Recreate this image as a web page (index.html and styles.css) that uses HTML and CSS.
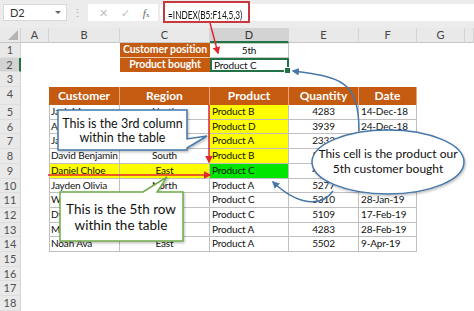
FILE: index.html
```html
<!DOCTYPE html>
<html>
<head>
<meta charset="utf-8">
<link rel="stylesheet" href="styles.css">
</head>
<body>
<div class="app">
  <div class="topbar">
    <div class="namebox"><span>D2</span><span class="caret"></span></div>
    <div class="dots">⋮</div>
    <div class="fxbtns"><span class="btn">✕</span><span class="btn">✓</span><span class="btn fx"><i>f</i><small>x</small></span></div>
    <div class="formula"><div class="fbox"><span class="ftext">=INDEX(B5:F14,5,3)</span></div></div>
  </div>
  <div class="sheet">
    <div class="ch corner"></div><div class="ch">A</div><div class="ch">B</div><div class="ch">C</div><div class="ch on">D</div><div class="ch">E</div><div class="ch">F</div><div class="ch">G</div><div class="ch"></div>

    <div class="rh">1</div><div></div><div></div><div class="lab top">Customer position</div><div class="val">5th</div><div></div><div></div><div></div><div></div>
    <div class="rh on">2</div><div></div><div></div><div class="lab">Product bought</div><div class="val sel">Product C</div><div></div><div></div><div></div><div></div>
    <div class="rh">3</div><div></div><div></div><div></div><div></div><div></div><div></div><div></div><div></div>

    <div class="rh">4</div><div></div><div class="th first">Customer</div><div class="th">Region</div><div class="th">Product</div><div class="th">Quantity</div><div class="th">Date</div><div></div><div></div>

    <div class="rh">5</div><div></div><div class="td first">Jack Mason</div><div class="td mid">North</div><div class="td yel">Product B</div><div class="td mid">4283</div><div class="td">14-Dec-18</div><div></div><div></div>
    <div class="rh">6</div><div></div><div class="td first">Aiden Lucas</div><div class="td mid"></div><div class="td yel">Product D</div><div class="td mid">3939</div><div class="td">24-Dec-18</div><div></div><div></div>
    <div class="rh">7</div><div></div><div class="td first">James Ethan</div><div class="td mid"></div><div class="td yel">Product A</div><div class="td mid">2333</div><div class="td"></div><div></div><div></div>
    <div class="rh">8</div><div></div><div class="td first">David Benjamin</div><div class="td mid">South</div><div class="td yel">Product B</div><div class="td mid">5123</div><div class="td"></div><div></div><div></div>
    <div class="rh">9</div><div></div><div class="td first yel">Daniel Chloe</div><div class="td mid yel">East</div><div class="td grn">Product C</div><div class="td mid">4782</div><div class="td"></div><div></div><div></div>
    <div class="rh">10</div><div></div><div class="td first">Jayden Olivia</div><div class="td mid">North</div><div class="td">Product A</div><div class="td mid">5277</div><div class="td"></div><div></div><div></div>
    <div class="rh">11</div><div></div><div class="td first">William Emma</div><div class="td mid"></div><div class="td">Product C</div><div class="td mid">5310</div><div class="td">28-Jan-19</div><div></div><div></div>
    <div class="rh">12</div><div></div><div class="td first">Dylan Sophia</div><div class="td mid"></div><div class="td">Product C</div><div class="td mid">5109</div><div class="td">17-Feb-19</div><div></div><div></div>
    <div class="rh">13</div><div></div><div class="td first">Mason Ella</div><div class="td mid"></div><div class="td">Product A</div><div class="td mid">4283</div><div class="td">28-Feb-19</div><div></div><div></div>
    <div class="rh">14</div><div></div><div class="td first">Noah Ava</div><div class="td mid">East</div><div class="td">Product A</div><div class="td mid">5502</div><div class="td">9-Apr-19</div><div></div><div></div>

    <div class="rh">15</div><div></div><div></div><div></div><div></div><div></div><div></div><div></div><div></div>
    <div class="rh">16</div><div></div><div></div><div></div><div></div><div></div><div></div><div></div><div></div>
    <div class="rh">17</div><div></div><div></div><div></div><div></div><div></div><div></div><div></div><div></div>
    <div class="rh">18</div><div></div><div></div><div></div><div></div><div></div><div></div><div></div><div></div>
  </div>

  <svg class="overlay" width="474" height="311" viewBox="0 0 474 311">
    <defs>
      <marker id="ar" viewBox="0 0 10 10" refX="8" refY="5" markerWidth="5" markerHeight="5" orient="auto"><path d="M0,0 L10,5 L0,10 z" fill="#e3262e"/></marker>
      <marker id="ab" viewBox="0 0 10 10" refX="8" refY="5" markerWidth="5" markerHeight="5" orient="auto"><path d="M0,0 L10,5 L0,10 z" fill="#4677a8"/></marker>
      <filter id="sh" x="-10%" y="-10%" width="130%" height="130%"><feDropShadow dx="1" dy="1.5" stdDeviation="1" flood-color="#000" flood-opacity="0.25"/></filter>
    </defs>
    <path d="M210 23 L218 53" class="red" marker-end="url(#ar)"/>
    <path d="M209 105 L209 162" class="red" marker-end="url(#ar)"/>
    <path d="M48 175 L210 175" class="red" marker-end="url(#ar)"/>
    <path d="M359 131 C359 80 340 77 293 71" class="blue" marker-end="url(#ab)"/>
    <path d="M333 191 C322 207 298 206 273 182" class="blue" marker-end="url(#ab)"/>
    <path d="M58 110 H187 V139 L207 136 L187 148 V150 H58 Z" class="c1" filter="url(#sh)"/>
    <text class="ct" x="122.5" y="128">This is the 3rd column</text>
    <text class="ct" x="122.5" y="142">within the table</text>
    <path d="M60 192 H143 L167 177 L157 192 H183 V241 H60 Z" class="c2" filter="url(#sh)"/>
    <text class="ct big" x="121" y="214">This is the 5th row</text>
    <text class="ct big" x="121" y="230">within the table</text>
    <ellipse cx="388" cy="162" rx="76" ry="32" class="c1" filter="url(#sh)"/>
    <text class="ct sm" x="388" y="158">This cell is the product our</text>
    <text class="ct sm" x="388" y="173">5th customer bought</text>
  </svg>
</div>
</body>
</html>
```

FILE: styles.css
```css
* { box-sizing: border-box; margin: 0; padding: 0; }
html, body { width: 474px; height: 311px; overflow: hidden; background: #fff; }
body { font-family: "Lato", "Liberation Sans", sans-serif; color: #111; }
.app { position: relative; width: 474px; height: 311px; }

.topbar {
  height: 28px;
  background: #ececec;
  display: flex;
  align-items: flex-start;
  padding: 4px 0 0 3px;
}
.namebox {
  width: 64px; height: 17px;
  background: #fff;
  border: 1px solid #d9d9d9;
  display: flex; align-items: center; justify-content: space-between;
  padding: 0 5px 0 6px;
  font-size: 11px; color: #333;
}
.caret {
  width: 0; height: 0;
  border-left: 3px solid transparent; border-right: 3px solid transparent;
  border-top: 3px solid #666;
}
.dots { width: 21px; text-align: center; font-size: 11px; color: #aaa; line-height: 17px; }
.fxbtns {
  width: 70px; height: 17px; background: #fff;
  display: flex; align-items: center; justify-content: space-around;
  padding: 0 2px 0 4px;
  font-size: 11px; color: #c0c0c0;
}
.fxbtns .fx { color: #666; font-family: "Liberation Serif", serif; font-size: 11px; }
.fxbtns .fx small { font-size: 7px; }
.formula {
  flex: 1; height: 17px; background: #fff; margin-left: 2px;
  padding-left: 3px; display: flex; align-items: flex-start;
}
.fbox {
  flex: none;
  margin-top: -3px;
  width: 87px; height: 22px;
  border: 2px solid #c8383c;
  background: #fff;
  padding-left: 3px;
  overflow: hidden;
}
.ftext {
  display: inline-block;
  font-size: 10.5px; color: #111;
  line-height: 18px; white-space: nowrap;
  transform: scaleX(0.79); transform-origin: 0 50%;
}

.sheet {
  display: grid;
  grid-template-columns: 21px 28px 71px 90px 79px 70px 58px 48px 1fr;
  grid-template-rows: 15px 14.7px 14.7px 14.7px 18px repeat(14, 14.7px);
  font-size: 10px;
  letter-spacing: -0.15px;
}
.sheet > div { white-space: nowrap; overflow: hidden; line-height: 13.7px; }

.ch {
  background: #e9e9e9;
  border-right: 1px solid #d4d4d4;
  border-bottom: 1px solid #c6c6c6;
  text-align: center; color: #444; font-size: 11px; letter-spacing: 0;
  line-height: 14px !important;
}
.ch.on { background: #d3d3d3; border-bottom: 2px solid #217346; color: #333; }
.corner { position: relative; }
.corner::after {
  content: ""; position: absolute; right: 2px; bottom: 2px;
  width: 10px; height: 10px; background: #b4b4b4;
  clip-path: polygon(100% 0, 100% 100%, 0 100%);
}
.rh {
  background: #e9e9e9;
  border-right: 1px solid #d4d4d4;
  border-bottom: 1px solid #dedede;
  text-align: center; color: #505050; font-size: 11px; letter-spacing: 0;
}
.rh.on { background: #d3d3d3; border-right: 2px solid #217346; }

.lab {
  background: #c55a11; color: #fff; font-weight: 700;
  text-align: center; font-size: 10.5px; letter-spacing: -0.1px;
}
.lab.top { border-bottom: 1px solid #f3c6a6; }
.val {
  text-align: center;
  border-right: 1px solid #b9c9b9;
  border-top: 1px solid #bcd3bf;
  border-bottom: 1px solid #c9c9c9;
}
.val.sel {
  position: relative; overflow: visible !important;
  text-align: left; padding-left: 2px;
  border: 2px solid #217346;
  line-height: 11px !important;
}
.val.sel::after {
  content: ""; position: absolute; right: -4px; bottom: -4px;
  width: 5px; height: 5px; background: #217346; border: 1px solid #fff;
}

.th {
  background: #c55a11; color: #fff; font-weight: 700; font-size: 12px; letter-spacing: 0;
  text-align: center; line-height: 17px !important;
  border-right: 1px solid #eea27a;
}
.td {
  border-right: 1px solid #bfbfbf;
  border-bottom: 1px solid #bfbfbf;
  padding-left: 2px;
}
.td.first { border-left: 1px solid #bfbfbf; padding-left: 1px; }
.td.mid { text-align: center; padding-left: 0; }
.yel { background: #ffff00; }
.grn { background: #00e600; }

.overlay { position: absolute; left: 0; top: 0; pointer-events: none; }
.red { stroke: #e3262e; stroke-width: 1.5; fill: none; }
.blue { stroke: #4677a8; stroke-width: 1.5; fill: none; }
.c1 { fill: #fff; stroke: #4677a8; stroke-width: 1.5; }
.c2 { fill: #fff; stroke: #6faa4a; stroke-width: 1.5; }
.ct { font-family: "Lato", "DejaVu Sans", sans-serif; font-size: 12.5px; fill: #111; text-anchor: middle; }
.ct.big { font-size: 13.5px; }
.ct.sm { font-size: 12px; }
```
